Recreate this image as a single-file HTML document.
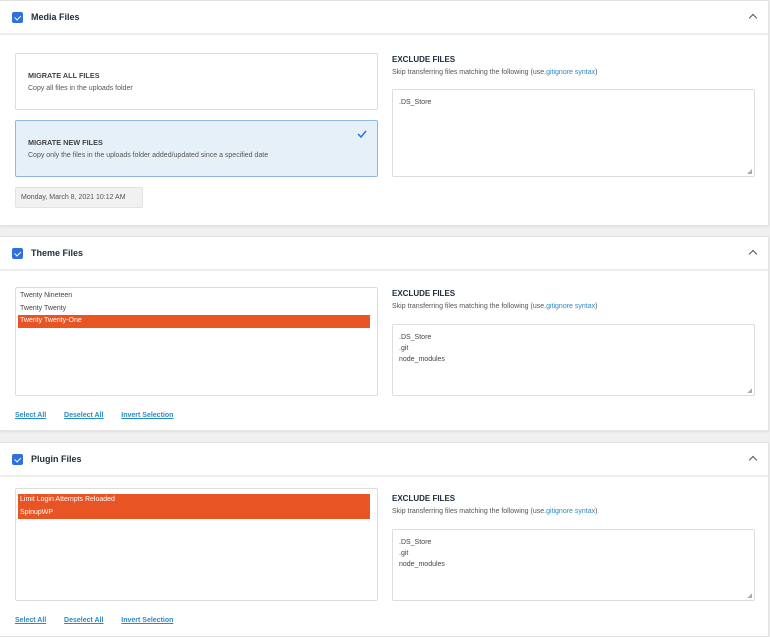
<!DOCTYPE html>
<html><head><style>
*{box-sizing:border-box;margin:0;padding:0}
body{width:770px;height:637px;background:#f0f0f1;font-family:"Liberation Sans",sans-serif;position:relative;overflow:hidden;color:#444}
.p{position:absolute;left:0;width:769px;background:#fff;border:1px solid #e3e3e3;border-left:none;box-shadow:0 1px 2px rgba(0,0,0,.06)}
.hd{position:absolute;left:0;right:0;top:0;height:34px;border-bottom:2px solid #eee}
.cb{position:absolute;left:12px;top:11px;width:11px;height:11px;border-radius:2px;background:#2f6fe0}
.cb:after{content:"";position:absolute;left:3.5px;top:2px;width:2.5px;height:4.5px;border:solid #fff;border-width:0 1.3px 1.3px 0;transform:rotate(45deg)}
.tt{position:absolute;left:31px;top:11px;font-size:9px;font-weight:bold;color:#1d2b3a}
.ch{position:absolute;right:12px;top:14px;width:6px;height:6px;border-left:1.3px solid #555;border-top:1.3px solid #555;transform:rotate(45deg)}
.ab{position:absolute}
.h2{font-size:8px;font-weight:bold;color:#1d2b3a}
.sub{font-size:7px;color:#555}
.sub a{color:#2a8ac4;text-decoration:none}
.ta{border:1px solid #ddd;border-radius:2px;font-size:7px;color:#444;padding:7px 6px;line-height:11px}
.ta:after{content:"";position:absolute;right:2px;bottom:2px;width:5px;height:5px;background:linear-gradient(135deg,transparent 50%,#aaa 50%)}
.card{border:1px solid #ddd;border-radius:2px;padding:17px 12px 0}
.card b{display:block;font-size:7.3px;line-height:9px;color:#444;margin-bottom:4px}
.card span{display:block;font-size:7px;line-height:9px;color:#555}
.lb{border:1px solid #ddd;border-radius:2px;font-size:7px;color:#444;padding:2px 2px}
.lb div{height:12.5px;line-height:12.5px;padding-left:2px;width:352px}
.sel{background:#e95424;color:#fff}
.lk{font-size:7px;color:#2a8ac4;text-decoration:underline;font-weight:bold}
</style></head><body>

<div class="p" style="top:0;height:226px">
 <div class="hd"><div class="cb"></div><div class="tt">Media Files</div><div class="ch"></div></div>
 <div class="ab card" style="left:15px;top:52px;width:363px;height:57px"><b>MIGRATE ALL FILES</b><span>Copy all files in the uploads folder</span></div>
 <div class="ab card" style="left:15px;top:119px;width:363px;height:57px;background:#e6f0f8;border-color:#8fb7e6"><b>MIGRATE NEW FILES</b><span>Copy only the files in the uploads folder added/updated since a specified date</span>
 <svg style="position:absolute;right:10px;top:9px" width="10" height="8" viewBox="0 0 10 8"><path d="M1 4l3 3 5-6" fill="none" stroke="#2f6fe0" stroke-width="1.5"/></svg></div>
 <div class="ab" style="left:15px;top:186px;width:128px;height:21px;background:#f1f1f1;border:1px solid #e2e2e2;border-radius:2px;font-size:7px;color:#555;padding:6px 5px">Monday, March 8, 2021 10:12 AM</div>
 <div class="ab h2" style="left:392px;top:54px">EXCLUDE FILES</div>
 <div class="ab sub" style="left:392px;top:68px">Skip transferring files matching the following (use.<a>gitignore syntax</a>)</div>
 <div class="ab ta" style="left:392px;top:88px;width:363px;height:88px">.DS_Store</div>
</div>

<div class="p" style="top:236px;height:195px">
 <div class="hd"><div class="cb"></div><div class="tt">Theme Files</div><div class="ch"></div></div>
 <div class="ab lb" style="left:15px;top:50px;width:363px;height:109px"><div>Twenty Nineteen</div><div>Twenty Twenty</div><div class="sel">Twenty Twenty-One</div></div>
 <div class="ab" style="left:15px;top:168px;top:167px"><span class="lk">Select All</span>&nbsp;&nbsp;&nbsp;&nbsp;<span class="lk">Deselect All</span>&nbsp;&nbsp;&nbsp;&nbsp;<span class="lk">Invert Selection</span></div>
 <div class="ab h2" style="left:392px;top:52px">EXCLUDE FILES</div>
 <div class="ab sub" style="left:392px;top:66px">Skip transferring files matching the following (use.<a>gitignore syntax</a>)</div>
 <div class="ab ta" style="left:392px;top:87px;width:363px;height:72px">.DS_Store<br>.git<br>node_modules</div>
</div>

<div class="p" style="top:442px;height:195px">
 <div class="hd"><div class="cb"></div><div class="tt">Plugin Files</div><div class="ch"></div></div>
 <div class="ab lb" style="left:15px;top:45px;width:363px;height:113px;padding-top:5px"><div class="sel">Limit Login Attempts Reloaded</div><div class="sel">SpinupWP</div></div>
 <div class="ab" style="left:15px;top:166px"><span class="lk">Select All</span>&nbsp;&nbsp;&nbsp;&nbsp;<span class="lk">Deselect All</span>&nbsp;&nbsp;&nbsp;&nbsp;<span class="lk">Invert Selection</span></div>
 <div class="ab h2" style="left:392px;top:51px">EXCLUDE FILES</div>
 <div class="ab sub" style="left:392px;top:65px">Skip transferring files matching the following (use.<a>gitignore syntax</a>)</div>
 <div class="ab ta" style="left:392px;top:86px;width:363px;height:72px">.DS_Store<br>.git<br>node_modules</div>
</div>
</body></html>
